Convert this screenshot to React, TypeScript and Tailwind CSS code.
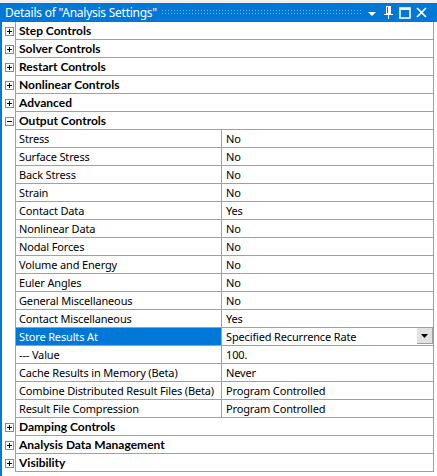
import React from "react";

type Row =
  | { kind: "group"; label: string; open?: boolean }
  | { kind: "prop"; label: string; value: string; selected?: boolean; dropdown?: boolean };

const rows: Row[] = [
  { kind: "group", label: "Step Controls" },
  { kind: "group", label: "Solver Controls" },
  { kind: "group", label: "Restart Controls" },
  { kind: "group", label: "Nonlinear Controls" },
  { kind: "group", label: "Advanced" },
  { kind: "group", label: "Output Controls", open: true },
  { kind: "prop", label: "Stress", value: "No" },
  { kind: "prop", label: "Surface Stress", value: "No" },
  { kind: "prop", label: "Back Stress", value: "No" },
  { kind: "prop", label: "Strain", value: "No" },
  { kind: "prop", label: "Contact Data", value: "Yes" },
  { kind: "prop", label: "Nonlinear Data", value: "No" },
  { kind: "prop", label: "Nodal Forces", value: "No" },
  { kind: "prop", label: "Volume and Energy", value: "No" },
  { kind: "prop", label: "Euler Angles", value: "No" },
  { kind: "prop", label: "General Miscellaneous", value: "No" },
  { kind: "prop", label: "Contact Miscellaneous", value: "Yes" },
  { kind: "prop", label: "Store Results At", value: "Specified Recurrence Rate", selected: true, dropdown: true },
  { kind: "prop", label: "--- Value", value: "100." },
  { kind: "prop", label: "Cache Results in Memory (Beta)", value: "Never" },
  { kind: "prop", label: "Combine Distributed Result Files (Beta)", value: "Program Controlled" },
  { kind: "prop", label: "Result File Compression", value: "Program Controlled" },
  { kind: "group", label: "Damping Controls" },
  { kind: "group", label: "Analysis Data Management" },
  { kind: "group", label: "Visibility" },
];

function Expander({ open }: { open?: boolean }) {
  return (
    <svg width="9" height="9" viewBox="0 0 9 9" className="block">
      <rect x="0.5" y="0.5" width="8" height="8" fill="#fff" stroke="#8a8a8a" />
      <line x1="2" y1="4.5" x2="7" y2="4.5" stroke="#000" />
      {!open && <line x1="4.5" y1="2" x2="4.5" y2="7" stroke="#000" />}
    </svg>
  );
}

export default function App() {
  return (
    <div className="w-[437px] h-[476px] bg-[#f0f0f0] pt-[3px] overflow-hidden text-[11px] tracking-[-0.15px] leading-none text-black font-['Noto_Sans','Open_Sans',sans-serif]">
      <div className="h-[473px] bg-white flex flex-col">
        {/* title bar */}
        <div className="h-[19px] bg-[#0078d7] flex items-center text-white pl-[5px] pr-[10px]">
          <span className="whitespace-nowrap text-[12px] tracking-[-0.25px]">Details of "Analysis Settings"</span>
          <svg className="ml-[5px] flex-1" height="6">
            <defs>
              <pattern id="dots" width="3" height="3" patternUnits="userSpaceOnUse">
                <rect x="0" y="0" width="1" height="1" fill="#7db9ea" />
              </pattern>
            </defs>
            <rect x="0" y="0" width="100%" height="6" fill="url(#dots)" />
          </svg>
          <svg width="10" height="6" viewBox="0 0 10 6" className="ml-[6px] mt-[2px]">
            <polygon points="1,1 9,1 5,5" fill="#fff" />
          </svg>
          <svg width="9" height="13" viewBox="0 0 9 13" className="ml-[7px]">
            <rect x="2.5" y="0.5" width="4" height="7" fill="none" stroke="#fff" />
            <rect x="4" y="1" width="2" height="6" fill="#fff" />
            <line x1="0" y1="8.5" x2="9" y2="8.5" stroke="#fff" />
            <line x1="4.5" y1="9" x2="4.5" y2="13" stroke="#fff" />
          </svg>
          <svg width="12" height="12" viewBox="0 0 12 12" className="ml-[6px]">
            <rect x="1" y="1" width="10" height="10" fill="none" stroke="#fff" strokeWidth="1.6" />
            <line x1="1" y1="2" x2="11" y2="2" stroke="#fff" strokeWidth="2" />
          </svg>
          <svg width="11" height="11" viewBox="0 0 11 11" className="ml-[5px]">
            <line x1="1" y1="1" x2="10" y2="10" stroke="#fff" strokeWidth="1.7" />
            <line x1="10" y1="1" x2="1" y2="10" stroke="#fff" strokeWidth="1.7" />
          </svg>
        </div>
        {/* body */}
        <div className="flex-1 border-l-2 border-[#0078d7] flex flex-col">
          <div className="w-[432px]">
            {rows.map((r, i) => (
              <div key={i} className="flex h-[18px]">
                <div className="w-[14px] flex items-center justify-center pl-[1px] border-r border-[#a0a0a0]">
                  {r.kind === "group" && <Expander open={r.open} />}
                </div>
                {r.kind === "group" ? (
                  <div className="flex-1 border-b border-r border-[#a0a0a0] flex items-center pl-[3px] font-bold text-[12px] tracking-normal whitespace-nowrap font-['Lato','Noto_Sans',sans-serif]">
                    {r.label}
                  </div>
                ) : (
                  <>
                    <div
                      className={
                        "w-[206px] border-b border-r border-[#a0a0a0] flex items-center pl-[3px] whitespace-nowrap overflow-hidden " +
                        (r.selected ? "bg-[#0078d7] text-white" : "")
                      }
                    >
                      {r.label}
                    </div>
                    <div className="flex-1 border-b border-r border-[#a0a0a0] flex items-center pl-[4px] whitespace-nowrap relative">
                      {r.value}
                      {r.dropdown && (
                        <div className="absolute right-0 top-0 w-[16px] h-[16px] bg-[#e1e1e1] border-r border-b border-[#a0a0a0] flex items-center justify-center">
                          <svg width="7" height="4" viewBox="0 0 7 4">
                            <polygon points="0,0 7,0 3.5,4" fill="#000" />
                          </svg>
                        </div>
                      )}
                    </div>
                  </>
                )}
              </div>
            ))}
          </div>
        </div>
      </div>
    </div>
  );
}
